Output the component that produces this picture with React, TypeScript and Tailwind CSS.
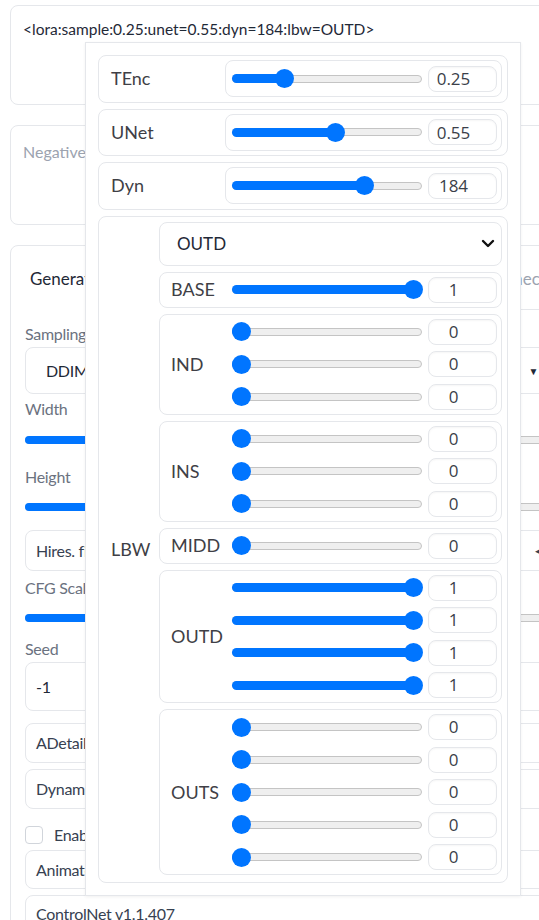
import React from 'react';

function Slider({ v }: { v: number }) {
  const c = 9 + v * 172;
  return (
    <div className="relative h-[20px] w-[190px] shrink-0">
      <div className="absolute left-0 right-0 top-[6px] h-[8px] rounded-full border border-[#c4c4c4] bg-[#efefef]" />
      <div className="absolute left-0 top-[5.5px] h-[9px] rounded-full bg-[#0075ff]" style={{ width: c }} />
      <div className="absolute top-[0.5px] h-[19px] w-[19px] rounded-full bg-[#0075ff]" style={{ left: c - 9.5 }} />
    </div>
  );
}

function NumBox({ value }: { value: string }) {
  return (
    <div className="flex h-[26px] w-[69px] shrink-0 items-center justify-center rounded-lg border border-[#e5e7eb] pr-[18px] font-['Open_Sans',sans-serif] text-[17px] text-[#3b3f4a] shadow-[inset_0_1px_2px_rgba(0,0,0,0.04)]">
      {value}
    </div>
  );
}

function SliderRow({ v, value }: { v: number; value: string }) {
  return (
    <div className="flex items-center gap-[6px]">
      <Slider v={v} />
      <NumBox value={value} />
    </div>
  );
}

function MainRow({ label, v, value }: { label: string; v: number; value: string }) {
  return (
    <div className="flex h-[47.5px] items-center rounded-lg border border-[#e5e7eb]">
      <div className="w-[126px] pl-[12px] text-[18px] text-[#3f3f46]">{label}</div>
      <div className="flex h-[37px] items-center gap-[6px] rounded-lg border border-[#e5e7eb] pl-[6px] pr-[4px]">
        <Slider v={v} />
        <NumBox value={value} />
      </div>
    </div>
  );
}

function Group({ label, rows }: { label: string; rows: [number, string][] }) {
  return (
    <div className="flex items-center rounded-lg border border-[#e5e7eb]">
      <div className="w-[72px] pl-[11px] text-[18px] text-[#3f3f46]">{label}</div>
      <div className="flex flex-col gap-[6.5px] py-[4px] pr-[4px]">
        {rows.map(([v, value], i) => (
          <SliderRow key={i} v={v} value={value} />
        ))}
      </div>
    </div>
  );
}

function BgSlider() {
  return (
    <div className="relative h-[20px] w-[600px]">
      <div className="absolute left-0 right-0 top-[6px] h-[8px] rounded-full border border-[#c4c4c4] bg-[#efefef]" />
      <div className="absolute left-0 top-[6px] h-[8px] w-[260px] rounded-full bg-[#0075ff]" />
    </div>
  );
}

const zeros = (n: number): [number, string][] => Array.from({ length: n }, () => [0, '0']);
const ones = (n: number): [number, string][] => Array.from({ length: n }, () => [1, '1']);

export default function App() {
  return (
    <div className="relative h-[920px] w-[539px] overflow-hidden bg-white font-['Lato',sans-serif]">
      {/* page behind the popup */}
      <div className="flex w-[720px] flex-col px-[10px] pt-[5px]">
        <div className="h-[100px] rounded-lg border border-[#e5e7eb] pl-[12px] pt-[11px] text-[15.5px] leading-[24px] text-[#1f2937]">
          &lt;lora:sample:0.25:unet=0.55:dyn=184:lbw=OUTD&gt;
        </div>
        <div className="mt-[20px] h-[100px] rounded-lg border border-[#e5e7eb] pl-[12px] pt-[14px] text-[16px] leading-[24px] text-[#9ca3af]">
          Negative prompt (press Ctrl+Enter or Alt+Enter to generate)
        </div>
        <div className="mt-[20px] h-[720px] rounded-lg border border-[#e5e7eb]">
          <div className="flex h-[64px] text-[17px]">
            <div className="flex w-[140px] items-center pl-[19px] pt-[2px] text-[#1f2937]">Generation</div>
            <div className="flex flex-1 items-center border-b border-[#e5e7eb] pt-[2px] text-[#9ca3af]">
              <span className="w-[170px]">Textual Inversion</span>
              <span className="w-[181px]">Hypernetworks</span>
              <span>Checkpoints</span>
            </div>
          </div>
          <div className="flex flex-col pl-[14px] text-[16px] leading-[24px] tracking-[-0.3px]">
            <div className="mt-[12px] h-[24px] text-[#6b7280]">Sampling method</div>
            <div className="mt-[1px] flex h-[47px] w-[530px] items-center justify-between rounded-lg border border-[#e5e7eb] pl-[20px] pr-[16px] text-[#1f2937]">
              <span>DDIM</span>
              <span className="text-[10px] text-[#1f2937]">▼</span>
            </div>
            <div className="mt-[3px] h-[24px] text-[#6b7280]">Width</div>
            <div className="mt-[9px]">
              <BgSlider />
            </div>
            <div className="mt-[15px] h-[24px] text-[#6b7280]">Height</div>
            <div className="mt-[8px]">
              <BgSlider />
            </div>
            <div className="mt-[13px] flex h-[41px] w-[530px] items-center justify-between rounded-lg border border-[#e5e7eb] pl-[10px] pr-[12px] text-[#374151]">
              <span>Hires. fix</span>
              <span className="text-[9px] text-[#374151]">◀</span>
            </div>
            <div className="mt-[5px] h-[24px] text-[#6b7280]">CFG Scale</div>
            <div className="mt-[8px]">
              <BgSlider />
            </div>
            <div className="mt-[9px] h-[24px] text-[#6b7280]">Seed</div>
            <div className="mt-[1px] flex h-[49px] w-[600px] items-center rounded-lg border border-[#e5e7eb] pl-[10px] text-[#1f2937]">
              -1
            </div>
            <div className="mt-[12px] flex h-[40px] w-[600px] items-center rounded-lg border border-[#e5e7eb] pl-[10px] text-[#374151]">
              ADetailer
            </div>
            <div className="mt-[6px] flex h-[40px] w-[600px] items-center rounded-lg border border-[#e5e7eb] pl-[10px] text-[#374151]">
              Dynamic Prompts
            </div>
            <div className="mt-[17px] flex h-[18px] items-center gap-[11px] text-[#374151]">
              <div className="h-[18px] w-[18px] rounded border border-[#d1d5db]" />
              <span>Enable Tiled Diffusion</span>
            </div>
            <div className="mt-[6px] flex h-[39px] w-[600px] items-center rounded-lg border border-[#e5e7eb] pl-[10px] text-[#374151]">
              AnimateDiff
            </div>
            <div className="mt-[6px] flex h-[40px] w-[600px] rounded-lg border border-[#e5e7eb] pl-[10px] pt-[6px] text-[#374151]">
              ControlNet v1.1.407
            </div>
          </div>
        </div>
      </div>

      {/* LoRA block weight popup */}
      <div className="absolute left-[85px] top-[42px] flex w-[436px] flex-col gap-[6px] border border-[#e5e7eb] bg-white p-[12px] shadow-[0_1px_3px_rgba(0,0,0,0.06)]">
        <MainRow label="TEnc" v={0.25} value="0.25" />
        <MainRow label="UNet" v={0.55} value="0.55" />
        <MainRow label="Dyn" v={0.72} value="184" />
        <div className="flex items-center rounded-lg border border-[#e5e7eb]">
          <div className="w-[60px] pl-[12px] text-[18px] text-[#3f3f46]">LBW</div>
          <div className="flex w-[348px] flex-col gap-[6px] pb-[7px] pr-[5px] pt-[5px]">
            <div className="flex h-[44px] items-center justify-between rounded-lg border border-[#e5e7eb] pl-[17px] pr-[6px] text-[17px] text-[#1f2937]">
              <span>OUTD</span>
              <svg width="14" height="9" viewBox="0 0 14 9" fill="none">
                <path d="M2 2L7 7L12 2" stroke="#111" strokeWidth="2.4" strokeLinecap="round" strokeLinejoin="round" />
              </svg>
            </div>
            <Group label="BASE" rows={ones(1)} />
            <Group label="IND" rows={zeros(3)} />
            <Group label="INS" rows={zeros(3)} />
            <Group label="MIDD" rows={zeros(1)} />
            <Group label="OUTD" rows={ones(4)} />
            <Group label="OUTS" rows={zeros(5)} />
          </div>
        </div>
      </div>
    </div>
  );
}
